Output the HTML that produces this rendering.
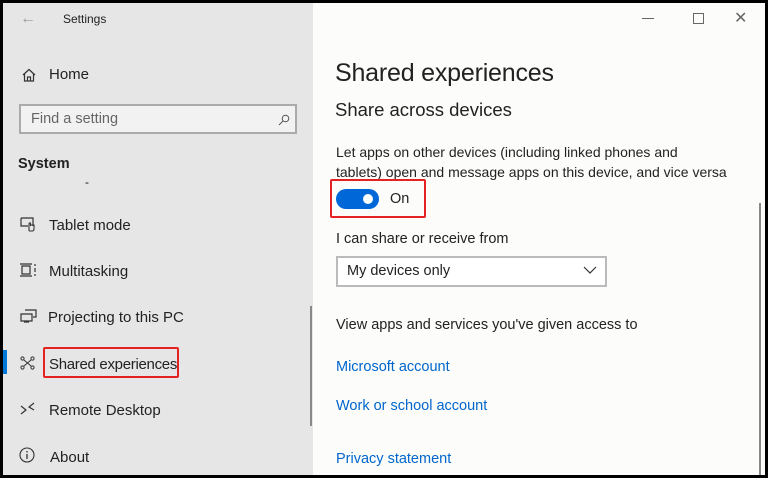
<!DOCTYPE html>
<html><head><style>
*{margin:0;padding:0;box-sizing:border-box}
body{width:768px;height:478px;background:#000;position:relative;overflow:hidden;font-family:"Liberation Sans",sans-serif;color:#111}
.left{position:absolute;left:3px;top:3px;width:310px;height:472px;background:#e6e6e6}
.right{position:absolute;left:313px;top:3px;width:452px;height:472px;background:#fcfcfb}
.t{position:absolute;white-space:nowrap}
.nav{font-size:15px;color:#222}
.link{color:#0066cc;font-size:14.5px}
</style></head><body>
<div class="left">
  <div class="t" style="left:17px;top:7px;font-size:16px;color:#999">&#8592;</div>
  <div class="t" style="left:60px;top:9px;font-size:12px;color:#222">Settings</div>
  <svg class="t" style="left:19px;top:65px" width="14" height="14" viewBox="0 0 14 14"><path d="M1 7 L7 1.5 L13 7 M2.5 6 V13 H11.5 V6 M5.5 13 V9 H8.5 V13" fill="none" stroke="#333" stroke-width="1.2"/></svg>
  <div class="t nav" style="left:46px;top:63px">Home</div>
  <div class="t" style="left:16px;top:101px;width:278px;height:30px;border:2px solid #aaa;background:#f2f2f2"></div>
  <div class="t" style="left:28px;top:108px;font-size:14.5px;color:#666">Find a setting</div>
  <svg class="t" style="left:275px;top:111px" width="12" height="12" viewBox="0 0 12 12"><circle cx="7.5" cy="4.5" r="3.3" fill="none" stroke="#555"/><path d="M5 7 L1 11" stroke="#555"/></svg>
  <div class="t" style="left:15px;top:153px;font-size:14.5px;font-weight:bold;color:#222">System</div>
  <div class="t" style="left:82px;top:172px;font-size:12px">-</div>
  <svg class="t" style="left:17px;top:214px" width="17" height="15" viewBox="0 0 17 15"><path d="M1 1 H13 V9 M8 9 H1 V1" fill="none" stroke="#333" stroke-width="1.2"/><path d="M9 14 V7 Q9 5.5 10.5 6 V9 M10.5 8 H14 V12 Q14 14 12 14 H9" fill="none" stroke="#333" stroke-width="1.1"/></svg>
  <div class="t nav" style="left:46px;top:214px">Tablet mode</div>
  <svg class="t" style="left:17px;top:260px" width="17" height="14" viewBox="0 0 17 14"><path d="M0 1 H12 M0 13 H12 M2 3 H10 V11 H2 Z M15 1 V3 M15 5 V9 M15 11 V13" fill="none" stroke="#333" stroke-width="1.2"/></svg>
  <div class="t nav" style="left:46px;top:260px">Multitasking</div>
  <svg class="t" style="left:17px;top:306px" width="17" height="14" viewBox="0 0 17 14"><path d="M5 1 H16 V8 H13 M1 5 H12 V12 H1 Z M4 13 H9" fill="none" stroke="#333" stroke-width="1.2"/></svg>
  <div class="t nav" style="left:45px;top:306px">Projecting to this PC</div>
  <div class="t" style="left:0;top:347px;width:4px;height:24px;background:#0078d7"></div>
  <svg class="t" style="left:17px;top:353px" width="15" height="14" viewBox="0 0 15 14"><circle cx="2.5" cy="2.5" r="1.6" fill="none" stroke="#333"/><circle cx="12.5" cy="2.5" r="1.6" fill="none" stroke="#333"/><circle cx="2.5" cy="11.5" r="1.6" fill="none" stroke="#333"/><circle cx="12.5" cy="11.5" r="1.6" fill="none" stroke="#333"/><path d="M4 4 L11 10 M11 4 L4 10" stroke="#333"/></svg>
  <div class="t" style="left:40px;top:344px;width:136px;height:31px;border:2px solid #e52222;border-radius:2px"></div>
  <div class="t nav" style="left:46px;top:353px;letter-spacing:-0.3px">Shared experiences</div>
  <svg class="t" style="left:17px;top:399px" width="15" height="14" viewBox="0 0 15 14"><path d="M1 4 L6 8 L1 12 M14 1 L9 5 L14 8" fill="none" stroke="#333" stroke-width="1.2"/></svg>
  <div class="t nav" style="left:46px;top:399px">Remote Desktop</div>
  <svg class="t" style="left:16px;top:444px" width="16" height="16" viewBox="0 0 16 16"><circle cx="8" cy="8" r="7" fill="none" stroke="#333" stroke-width="1.1"/><path d="M8 7 V12 M8 4 V5.5" stroke="#333" stroke-width="1.3"/></svg>
  <div class="t nav" style="left:47px;top:446px">About</div>
  <div class="t" style="left:307px;top:303px;width:2px;height:120px;background:#888"></div>
</div>
<div class="right">
  <div class="t" style="left:329px;top:15px;width:12px;height:1px;background:#666"></div>
  <div class="t" style="left:380px;top:10px;width:11px;height:11px;border:1px solid #666"></div>
  <div class="t" style="left:421px;top:5px;font-size:16px;color:#666">&#10005;</div>
  <div class="t" style="left:22px;top:56px;font-size:25px;color:#222;letter-spacing:-0.2px">Shared experiences</div>
  <div class="t" style="left:22px;top:96px;font-size:18.5px;color:#222">Share across devices</div>
  <div class="t" style="left:23px;top:140px;font-size:14px;color:#222;line-height:19.5px">Let apps on other devices (including linked phones and<br>tablets) open and message apps on this device, and vice versa</div>
  <div class="t" style="left:17px;top:176px;width:96px;height:39px;border:2px solid #e52222;border-radius:2px"></div>
  <div class="t" style="left:23px;top:186px;width:43px;height:20px;border-radius:10px;background:#0067d9"></div>
  <div class="t" style="left:50px;top:191px;width:10px;height:10px;border-radius:5px;background:#fff"></div>
  <div class="t" style="left:77px;top:188px;font-size:14.5px;color:#222">On</div>
  <div class="t" style="left:23px;top:228px;font-size:14.5px;color:#222">I can share or receive from</div>
  <div class="t" style="left:23px;top:253px;width:271px;height:31px;border:2px solid #bbb;background:#fff"></div>
  <div class="t" style="left:34px;top:260px;font-size:14.5px;color:#222">My devices only</div>
  <svg class="t" style="left:270px;top:263px" width="14" height="8" viewBox="0 0 14 8"><path d="M1 1 L7 7 L13 1" fill="none" stroke="#333" stroke-width="1.2"/></svg>
  <div class="t" style="left:23px;top:314px;font-size:14.5px;color:#222">View apps and services you've given access to</div>
  <div class="t link" style="left:23px;top:356px">Microsoft account</div>
  <div class="t link" style="left:23px;top:395px">Work or school account</div>
  <div class="t link" style="left:23px;top:448px">Privacy statement</div>
  <div class="t" style="left:446px;top:200px;width:2px;height:272px;background:#888"></div>
</div>
</body></html>
